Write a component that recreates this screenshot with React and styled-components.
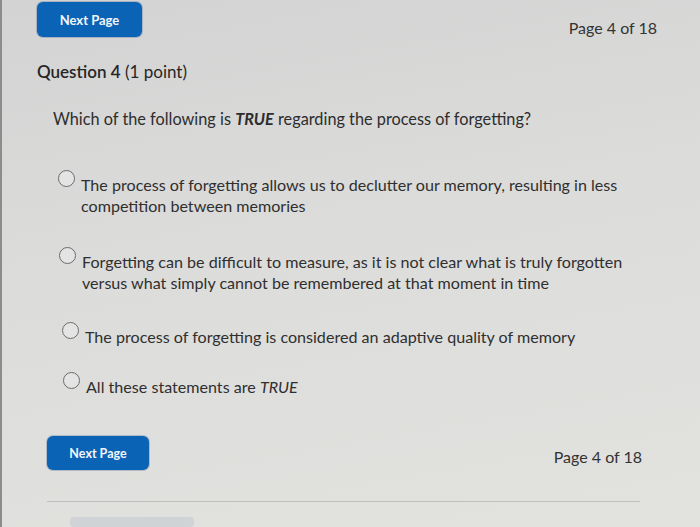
import React from "react";
import styled, { createGlobalStyle } from "styled-components";

const GlobalStyle = createGlobalStyle`
  html, body {
    margin: 0;
    padding: 0;
    background: #d8d8d7;
  }
  body {
    font-family: Lato, "Noto Sans", sans-serif;
    color: #2d2d2d;
  }
`;

const Screen = styled.div`
  width: 700px;
  height: 527px;
  overflow: hidden;
  box-sizing: border-box;
  border-left: 2px solid #8c8c8c;
  background: linear-gradient(170deg, #d3d3d3 0%, #dcdcdb 45%, #e2e2df 100%);
  display: flex;
  flex-direction: column;
`;

const Bar = styled.div`
  display: flex;
  justify-content: space-between;
  align-items: ${(p) => (p.bottom ? "center" : "flex-start")};
  padding: ${(p) => (p.bottom ? "0 58px 0 45px" : "2px 43px 0 35px")};
  margin-top: ${(p) => (p.bottom ? "39px" : "0")};
`;

const Button = styled.button`
  width: ${(p) => (p.small ? "102px" : "105px")};
  height: ${(p) => (p.small ? "34px" : "35px")};
  border: none;
  border-radius: 6px;
  background: #0b63b6;
  color: #f2f6fb;
  font-family: Lato, "Noto Sans", sans-serif;
  font-weight: 700;
  font-size: ${(p) => (p.small ? "12.5px" : "13px")};
  padding: 0;
  box-shadow: 0 0 0 1px rgba(30, 80, 140, 0.25);
`;

const PageCount = styled.div`
  font-size: 16px;
  color: #333;
  margin-top: ${(p) => (p.bottom ? "7px" : "16px")};
`;

const Heading = styled.h2`
  margin: 24px 0 0 35px;
  font-size: 17px;
  font-weight: 400;
  color: #262626;
  & strong {
    font-weight: 600;
  }
`;

const Prompt = styled.p`
  margin: 27px 0 0 51px;
  font-size: 16.3px;
  & em {
    font-weight: 700;
  }
`;

const Options = styled.div`
  display: flex;
  flex-direction: column;
  margin-top: 46px;
`;

const Option = styled.label`
  display: flex;
  align-items: flex-start;
  gap: 6px;
  margin-top: ${(p) => p.space}px;
  padding-left: ${(p) => p.indent}px;
  font-size: 16.1px;
  line-height: 21px;
  color: #2f2f2f;
`;

const Radio = styled.span`
  flex: none;
  width: 15px;
  height: 15px;
  border: 1.5px solid #6b6b6b;
  border-radius: 50%;
  background: #e4e4e4;
  margin-top: -4px;
`;

const OptionText = styled.span`
  max-width: 560px;
`;

const Rule = styled.div`
  margin: 31px 60px 0 45px;
  height: 1px;
  background: #bfbfbd;
`;

const Stub = styled.div`
  margin: 15px 0 0 68px;
  width: 124px;
  height: 20px;
  border-radius: 4px;
  background: #d0d3d6;
`;

const options = [
  {
    indent: 56,
    space: 0,
    text: "The process of forgetting allows us to declutter our memory, resulting in less competition between memories",
  },
  {
    indent: 57,
    space: 35,
    text: "Forgetting can be difficult to measure, as it is not clear what is truly forgotten versus what simply cannot be remembered at that moment in time",
  },
  {
    indent: 60,
    space: 33,
    text: "The process of forgetting is considered an adaptive quality of memory",
  },
  {
    indent: 61,
    space: 29,
    text: (
      <>
        All these statements are <i>TRUE</i>
      </>
    ),
  },
];

export default function App() {
  return (
    <>
      <GlobalStyle />
      <Screen>
        <Bar>
          <Button>Next Page</Button>
          <PageCount>Page 4 of 18</PageCount>
        </Bar>
        <Heading>
          <strong>Question 4</strong> (1 point)
        </Heading>
        <Prompt>
          Which of the following is <em>TRUE</em> regarding the process of forgetting?
        </Prompt>
        <Options>
          {options.map((o, i) => (
            <Option key={i} indent={o.indent} space={o.space}>
              <Radio />
              <OptionText>{o.text}</OptionText>
            </Option>
          ))}
        </Options>
        <Bar bottom>
          <Button small>Next Page</Button>
          <PageCount bottom>Page 4 of 18</PageCount>
        </Bar>
        <Rule />
        <Stub />
      </Screen>
    </>
  );
}
